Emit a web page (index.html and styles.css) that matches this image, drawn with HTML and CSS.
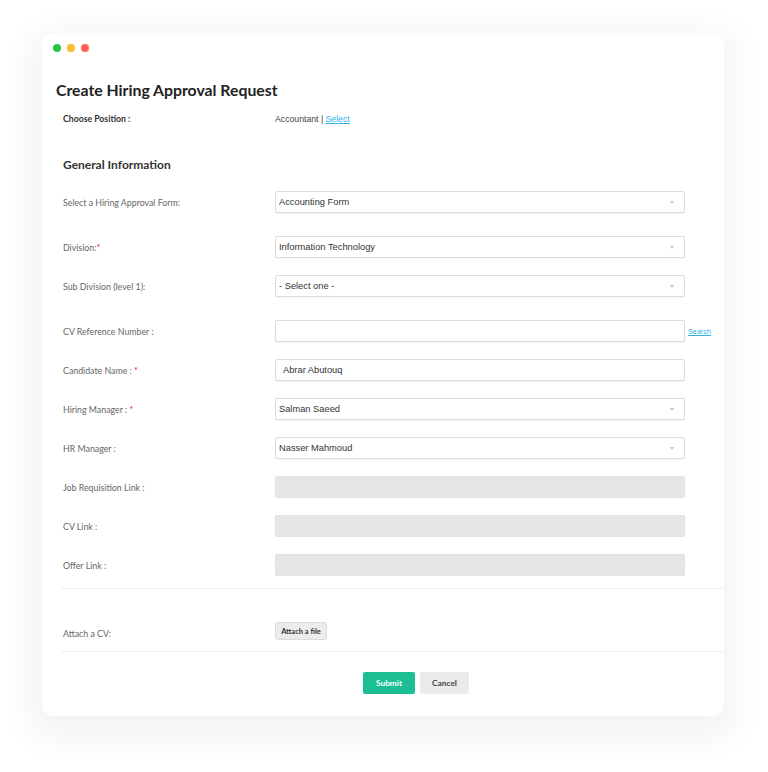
FILE: index.html
```html
<!DOCTYPE html>
<html>
<head>
<meta charset="utf-8">
<link rel="stylesheet" href="styles.css">
</head>
<body>
<div class="card">
  <div class="dots"><span class="dot green"></span><span class="dot yellow"></span><span class="dot red"></span></div>
  <h1 class="title">Create Hiring Approval Request</h1>
  <div class="choose">
    <div class="choose-label">Choose Position :</div>
    <div class="choose-value">Accountant | <a class="link">Select</a></div>
  </div>
  <h2 class="section">General Information</h2>

  <div class="row gap-lg">
    <div class="label">Select a Hiring Approval Form:</div>
    <div class="control select">Accounting Form<span class="arrow"></span></div>
  </div>
  <div class="row">
    <div class="label">Division:<span class="req">*</span></div>
    <div class="control select">Information Technology<span class="arrow"></span></div>
  </div>
  <div class="row gap-lg">
    <div class="label">Sub Division (level 1):</div>
    <div class="control select">- Select one -<span class="arrow"></span></div>
  </div>
  <div class="row">
    <div class="label">CV Reference Number :</div>
    <div class="control"></div>
    <a class="search">Search</a>
  </div>
  <div class="row">
    <div class="label">Candidate Name : <span class="req">*</span></div>
    <div class="control text">Abrar Abutouq</div>
  </div>
  <div class="row">
    <div class="label">Hiring Manager : <span class="req">*</span></div>
    <div class="control select">Salman Saeed<span class="arrow"></span></div>
  </div>
  <div class="row">
    <div class="label">HR Manager :</div>
    <div class="control select">Nasser Mahmoud<span class="arrow"></span></div>
  </div>
  <div class="row">
    <div class="label">Job Requisition Link :</div>
    <div class="control disabled"></div>
  </div>
  <div class="row">
    <div class="label">CV Link :</div>
    <div class="control disabled"></div>
  </div>
  <div class="row last">
    <div class="label">Offer Link :</div>
    <div class="control disabled"></div>
  </div>

  <div class="divider"></div>
  <div class="attach-row">
    <div class="label">Attach a CV:</div>
    <button class="attach">Attach a file</button>
  </div>
  <div class="divider second"></div>
  <div class="actions">
    <button class="btn submit">Submit</button>
    <button class="btn cancel">Cancel</button>
  </div>
</div>
</body>
</html>
```
FILE: styles.css
```css
html, body {
  margin: 0;
  padding: 0;
  background: #ffffff;
}
body {
  width: 768px;
  height: 772px;
  overflow: hidden;
  padding-top: 33px;
  box-sizing: border-box;
  font-family: Lato, "Noto Sans", sans-serif;
}
.card {
  margin-left: 42px;
  width: 682px;
  height: 683px;
  background: #fff;
  border-radius: 12px;
  box-shadow: 0 10px 30px 15px rgba(0,0,0,0.045);
  padding-top: 11px;
  box-sizing: border-box;
}
.dots {
  display: flex;
  gap: 6px;
  padding-left: 11px;
  height: 8px;
}
.dot {
  width: 8px;
  height: 8px;
  border-radius: 50%;
}
.green { background: #27c93f; }
.yellow { background: #fdbc2e; }
.red { background: #ff5f57; }
.title {
  margin: 28px 0 0 14px;
  font-size: 15.8px;
  line-height: 20px;
  font-weight: 700;
  color: #222;
}
.choose {
  display: flex;
  margin: 13px 0 0 21px;
  height: 12px;
  line-height: 12px;
  align-items: center;
}
.choose-label {
  width: 212px;
  font-size: 8.7px;
  font-weight: 700;
  color: #333;
}
.choose-value {
  font-family: "Liberation Sans", Arial, sans-serif;
  font-size: 8.7px;
  color: #444;
}
.link {
  color: #2fb1e6;
  text-decoration: underline;
}
.section {
  margin: 32px 0 0 21px;
  font-size: 12px;
  line-height: 15px;
  font-weight: 700;
  color: #333;
}
.row {
  display: flex;
  align-items: center;
  margin-left: 21px;
  height: 22px;
  margin-top: 17px;
}
.section + .row { margin-top: 19px; }
.row.gap-lg + .row { margin-top: 23px; }
.label {
  width: 212px;
  flex: none;
  font-size: 8.8px;
  color: #666;
}
.req { color: #e02020; }
.control {
  position: relative;
  width: 410px;
  height: 22px;
  box-sizing: border-box;
  border: 1px solid #dcdcdc;
  border-radius: 2px;
  background: #fff;
  font-family: "Liberation Sans", Arial, sans-serif;
  font-size: 9.3px;
  color: #333;
  line-height: 20px;
  padding-left: 3px;
  box-shadow: 0 1px 1px rgba(0,0,0,0.04);
}
.control.text { padding-left: 7px; }
.control.disabled {
  background: #e5e6e8;
  border-color: #e0e1e3;
  box-shadow: none;
}
.arrow {
  position: absolute;
  right: 10px;
  top: 9px;
  width: 0;
  height: 0;
  border-left: 2.5px solid transparent;
  border-right: 2.5px solid transparent;
  border-top: 3px solid #c4c4c4;
}
.search {
  margin-left: 3px;
  font-family: "Liberation Sans", Arial, sans-serif;
  font-size: 7.3px;
  color: #2fb1e6;
  text-decoration: underline;
}
.divider {
  margin: 12px 0 0 19px;
  height: 1px;
  background: #efefef;
}
.attach-row {
  display: flex;
  align-items: center;
  margin: 33px 0 0 21px;
  height: 18px;
}
.attach-row .label { padding-top: 4px; }
.attach {
  height: 18px;
  width: 52px;
  padding: 0;
  border: 1px solid #dadada;
  border-radius: 3px;
  background: #ececec;
  font-family: Lato, sans-serif;
  font-size: 7.5px;
  font-weight: 700;
  color: #333;
}
.divider.second { margin-top: 11px; }
.actions {
  display: flex;
  gap: 5px;
  margin-top: 20px;
  padding-left: 321px;
}
.btn {
  height: 22px;
  padding: 0;
  border: none;
  border-radius: 2px;
  font-family: Lato, sans-serif;
  font-size: 8.3px;
  font-weight: 700;
}
.submit {
  width: 52px;
  background: #1cbf94;
  color: #fff;
}
.cancel {
  width: 49px;
  background: #ebebeb;
  color: #444;
}
```
